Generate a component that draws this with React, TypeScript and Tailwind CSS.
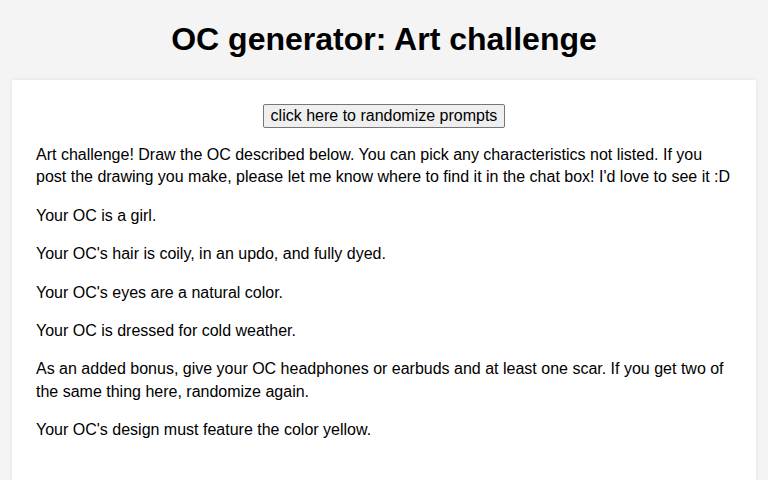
export default function App() {
  const prompts = [
    "Your OC is a girl.",
    "Your OC's hair is coily, in an updo, and fully dyed.",
    "Your OC's eyes are a natural color.",
    "Your OC is dressed for cold weather.",
    "As an added bonus, give your OC headphones or earbuds and at least one scar. If you get two of the same thing here, randomize again.",
    "Your OC's design must feature the color yellow.",
  ];

  return (
    <div className="min-h-screen bg-[#f4f4f4] px-3 pt-[21px] font-['Liberation_Sans',Arial,sans-serif] text-black">
      <h1 className="mb-[22px] text-center text-[32px] leading-[37px] font-bold">OC generator: Art challenge</h1>
      <div className="rounded-[2px] bg-white px-6 pt-6 pb-10 shadow-[0_0_4px_rgba(0,0,0,0.08)]">
        <div className="flex justify-center">
          <button className="h-6 rounded-[2px] border border-[#767676] bg-[#efefef] px-[7px] text-base leading-[20px] text-black">
            click here to randomize prompts
          </button>
        </div>
        <p className="mt-4 text-base leading-[1.4]">
          Art challenge! Draw the OC described below. You can pick any characteristics not listed. If you post the drawing you make, please let me know where to find it in the chat box! I'd love to see it :D
        </p>
        {prompts.map((p) => (
          <p key={p} className="mt-4 text-base leading-[1.4]">
            {p}
          </p>
        ))}
      </div>
    </div>
  );
}
